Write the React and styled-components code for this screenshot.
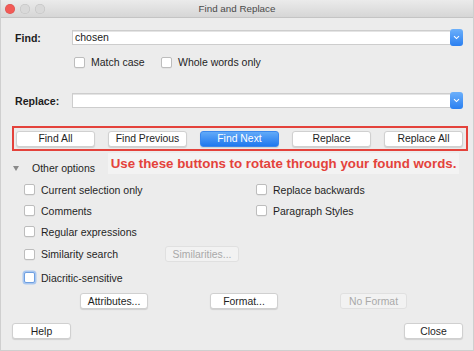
// App.jsx
import React from 'react';
import styled, { createGlobalStyle } from 'styled-components';

const GlobalStyle = createGlobalStyle`
  html, body {
    margin: 0;
    padding: 0;
    background: #ececec;
  }
  body {
    font-family: "Liberation Sans", Arial, sans-serif;
    color: #222;
  }
`;

const Window = styled.div`
  width: 474px;
  height: 351px;
  box-sizing: border-box;
  background: #ececec;
  border: 1px solid #cfcfcf;
  border-top: none;
  display: flex;
  flex-direction: column;
  overflow: hidden;
  position: relative;
`;

const TitleBar = styled.div`
  height: 17px;
  flex: none;
  display: flex;
  align-items: center;
  position: relative;
  background: linear-gradient(#ebebeb, #d6d6d6);
  border-bottom: 1px solid #c4c4c4;
`;

const Lights = styled.div`
  display: flex;
  gap: 5px;
  padding-left: 4px;
`;

const Light = styled.span`
  width: 10px;
  height: 10px;
  border-radius: 50%;
  background: ${p => p.$color};
  box-shadow: inset 0 0 0 0.5px rgba(0, 0, 0, 0.12);
`;

const Title = styled.div`
  flex: 1;
  text-align: center;
  font-size: 9.8px;
  color: #4a4a4a;
  margin-right: 44px;
`;

const Content = styled.div`
  display: flex;
  flex-direction: column;
  padding: 0 0 0 14px;
`;

const FieldRow = styled.div`
  display: flex;
  align-items: center;
  height: 17px;
  margin-top: ${p => p.$top}px;
`;

const Label = styled.div`
  width: 57px;
  font-size: 10.6px;
  font-weight: bold;
  color: #1d1d1d;
`;

const ComboInput = styled.div`
  width: 378px;
  height: 15px;
  box-sizing: border-box;
  background: #fff;
  border: 1px solid #cdcdcd;
  border-right: none;
  box-shadow: inset 0 1px 0 #e4e4e4;
  font-size: 10.5px;
  line-height: 13px;
  padding-left: 2px;
  color: #1a1a1a;
`;

const ComboButton = styled.div`
  width: 13px;
  height: 17px;
  border-radius: 3px;
  background: linear-gradient(#6cb0fb, #2a7ff0);
  display: flex;
  align-items: center;
  justify-content: center;
`;

const CheckLine = styled.div`
  display: flex;
  align-items: center;
  height: 12px;
  margin-top: 10px;
  padding-left: 59px;
`;

const CheckItem = styled.label`
  display: flex;
  align-items: center;
  font-size: 10.5px;
  color: #1f1f1f;
  width: ${p => (p.$width ? `${p.$width}px` : 'auto')};
`;

const Box = styled.span`
  width: 9px;
  height: 9px;
  flex: none;
  background: #fff;
  border: 1px solid ${p => (p.$focus ? '#6e9fe0' : '#bdbdbd')};
  border-radius: 2px;
  margin-right: 6px;
  box-shadow: ${p => (p.$focus ? '0 0 0 1.5px #a9c7f0' : '0 0.5px 0 rgba(0,0,0,0.08)')};
`;

const ButtonGroup = styled.div`
  position: relative;
  margin: 17px 0 0 -3px;
  width: 456px;
  height: 25px;
  box-sizing: border-box;
  border: 2px solid #e4423b;
  display: flex;
  align-items: center;
  gap: 13px;
  padding-left: 2px;
`;

const Button = styled.div`
  width: ${p => p.$w}px;
  height: 16px;
  box-sizing: border-box;
  flex: none;
  display: flex;
  align-items: center;
  justify-content: center;
  font-size: 10.4px;
  border-radius: 3px;
  color: ${p => (p.$primary ? '#fff' : p.$disabled ? '#a9a9a9' : '#1e1e1e')};
  background: ${p =>
    p.$primary
      ? 'linear-gradient(#62aaf8, #1f78ee)'
      : p.$disabled
      ? '#f2f2f2'
      : '#fff'};
  border: 1px solid ${p => (p.$primary ? '#3b87ec' : p.$disabled ? '#e0e0e0' : '#d0d0d0')};
  box-shadow: ${p => (p.$disabled ? 'none' : '0 1px 1px rgba(0,0,0,0.12)')};
`;

const Note = styled.div`
  position: absolute;
  left: 94px;
  top: 25px;
  width: 351px;
  height: 21px;
  display: flex;
  align-items: center;
  justify-content: center;
  background: #f3f3f3;
  color: #e4423b;
  font-size: 13.3px;
  font-weight: bold;
  white-space: nowrap;
`;

const OptionsHeader = styled.div`
  display: flex;
  align-items: center;
  height: 16px;
  margin: 9px 0 0 -2px;
  font-size: 10.5px;
  color: #1f1f1f;
`;

const Triangle = styled.span`
  width: 0;
  height: 0;
  border-left: 3px solid transparent;
  border-right: 3px solid transparent;
  border-top: 5px solid #8a8a8a;
  margin-right: 13px;
`;

const OptionsGrid = styled.div`
  display: grid;
  grid-template-columns: 232px auto;
  grid-auto-rows: 21px;
  align-items: center;
  padding-left: 9px;
  margin-top: 3px;
`;

const OptionRow = styled.div`
  display: flex;
  align-items: center;
  height: ${p => p.$h}px;
  padding-left: 9px;
`;

const ActionRow = styled.div`
  display: flex;
  align-items: center;
  gap: ${p => p.$gap}px;
  padding-left: ${p => p.$left}px;
  margin-top: ${p => p.$top}px;
`;

const Footer = styled.div`
  display: flex;
  justify-content: space-between;
  padding: 0 10px 0 11px;
  margin-top: 14px;
`;

const Chevron = () => (
  <svg width="7" height="5" viewBox="0 0 7 5">
    <path d="M1 1.2 L3.5 3.6 L6 1.2" fill="none" stroke="#fff" strokeWidth="1.1" />
  </svg>
);

const Combo = ({ value }) => (
  <>
    <ComboInput>{value}</ComboInput>
    <ComboButton>
      <Chevron />
    </ComboButton>
  </>
);

const Check = ({ children, focus, width }) => (
  <CheckItem $width={width}>
    <Box $focus={focus} />
    {children}
  </CheckItem>
);

const App = () => {
  return (
    <>
      <GlobalStyle />
      <Window>
        <TitleBar>
          <Lights>
            <Light $color="#f25a56" />
            <Light $color="#d9d9d9" />
            <Light $color="#d9d9d9" />
          </Lights>
          <Title>Find and Replace</Title>
        </TitleBar>

        <Content>
          <FieldRow $top={11}>
            <Label>Find:</Label>
            <Combo value="chosen" />
          </FieldRow>

          <CheckLine>
            <Check width={87}>Match case</Check>
            <Check>Whole words only</Check>
          </CheckLine>

          <FieldRow $top={24}>
            <Label>Replace:</Label>
            <Combo value="" />
          </FieldRow>

          <ButtonGroup>
            <Button $w={79}>Find All</Button>
            <Button $w={79}>Find Previous</Button>
            <Button $w={79} $primary>Find Next</Button>
            <Button $w={79}>Replace</Button>
            <Button $w={79}>Replace All</Button>
            <Note>Use these buttons to rotate through your found words.</Note>
          </ButtonGroup>

          <OptionsHeader>
            <Triangle />
            Other options
          </OptionsHeader>

          <OptionsGrid>
            <Check>Current selection only</Check>
            <Check>Replace backwards</Check>
            <Check>Comments</Check>
            <Check>Paragraph Styles</Check>
            <Check>Regular expressions</Check>
          </OptionsGrid>

          <OptionRow $h={24}>
            <Check width={141}>Similarity search</Check>
            <Button $w={74} $disabled>Similarities...</Button>
          </OptionRow>
          <OptionRow $h={23}>
            <Check focus>Diacritic-sensitive</Check>
          </OptionRow>
        </Content>

        <ActionRow $left={79} $gap={62} $top={4}>
          <Button $w={68}>Attributes...</Button>
          <Button $w={68}>Format...</Button>
          <Button $w={67} $disabled>No Format</Button>
        </ActionRow>

        <Footer>
          <Button $w={59}>Help</Button>
          <Button $w={59}>Close</Button>
        </Footer>
      </Window>
    </>
  );
};

export default App;
